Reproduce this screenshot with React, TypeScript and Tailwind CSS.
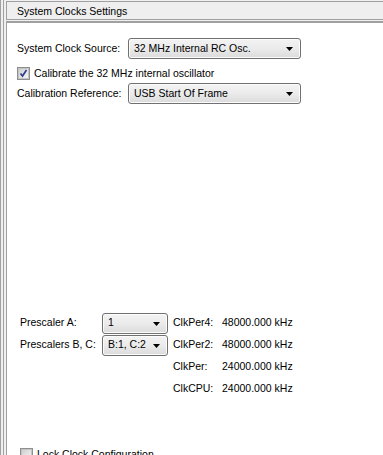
import React from 'react';

const font = { fontFamily: '"Liberation Sans", Arial, sans-serif' };

function Combo({ value, width }: { value: string; width: string }) {
    return (
        <div
            className={`relative flex h-[21px] ${width} items-center rounded-[3px] border border-[#707070] bg-gradient-to-b from-[#f3f3f3] via-[#ebebeb] to-[#dbdbdb] pl-[5px] shadow-[inset_0_0_0_1px_#fcfcfc]`}
        >
            <span className="text-black">{value}</span>
            <svg className="absolute right-[7px] top-[8px]" width="7" height="4" viewBox="0 0 7 4">
                <path d="M0 0H7L3.5 4Z" fill="#000" />
            </svg>
        </div>
    );
}

function CheckBox({ checked }: { checked?: boolean }) {
    return (
        <div className="flex h-[13px] w-[13px] items-center justify-center border border-[#8e8f8f] bg-white">
            <div className="relative h-[11px] w-[11px] border border-[#c4c4c4] bg-gradient-to-br from-[#cfcfcf] to-[#f6f6f6]">
                {checked && (
                    <svg className="absolute left-[0px] top-[0px]" width="9" height="9" viewBox="0 0 9 9">
                        <path d="M1.5 4.5L3.5 7L7.5 1" stroke="#2b3f8f" strokeWidth="1.7" fill="none" />
                    </svg>
                )}
            </div>
        </div>
    );
}

const clocks = [
    { name: 'ClkPer4:', value: '48000.000 kHz' },
    { name: 'ClkPer2:', value: '48000.000 kHz' },
    { name: 'ClkPer:', value: '24000.000 kHz' },
    { name: 'ClkCPU:', value: '24000.000 kHz' },
];

export default function App() {
    return (
        <div className="h-[455px] w-[383px] overflow-hidden bg-[#f0f0f0] text-[10.5px] text-black" style={font}>
            <div className="flex h-full border-l border-[#a0a0a0] pl-[2px]">
                <div className="flex h-full flex-1 flex-col border-l border-[#a0a0a0] pl-[2px]">
                    {/* header bar */}
                    <div className="mt-[1px] flex h-[19px] items-center border-y border-l border-[#a0a0a0] bg-[#efefef] pl-[10px] pt-[2px]">
                        System Clocks Settings
                    </div>
                    {/* settings panel */}
                    <div className="mt-[1px] flex flex-1 flex-col border-l border-t-2 border-[#a0a0a0] bg-white pl-[10px]">
                        <div className="mt-[15px] flex h-[21px] items-center">
                            <span className="w-[111px]">System Clock Source:</span>
                            <Combo value="32 MHz Internal RC Osc." width="w-[173px]" />
                        </div>
                        <div className="mt-[8px] flex h-[13px] items-center gap-[4px]">
                            <CheckBox checked />
                            <span>Calibrate the 32 MHz internal oscillator</span>
                        </div>
                        <div className="mt-[3px] flex h-[21px] items-center">
                            <span className="w-[111px]">Calibration Reference:</span>
                            <Combo value="USB Start Of Frame" width="w-[173px]" />
                        </div>

                        <div className="mt-[208px] flex pl-[3px]">
                            <div className="flex w-[82px] flex-col">
                                <div className="flex h-[22px] items-center">Prescaler A:</div>
                                <div className="flex h-[22px] items-center">Prescalers B, C:</div>
                            </div>
                            <div className="flex w-[71px] flex-col">
                                <div className="flex h-[22px] items-center">
                                    <Combo value="1" width="w-[66px]" />
                                </div>
                                <div className="flex h-[22px] items-center">
                                    <Combo value="B:1, C:2" width="w-[66px]" />
                                </div>
                            </div>
                            <div className="flex flex-col">
                                {clocks.map((c) => (
                                    <div key={c.name} className="flex h-[22px] items-center">
                                        <span className="w-[49px]">{c.name}</span>
                                        <span>{c.value}</span>
                                    </div>
                                ))}
                            </div>
                        </div>

                        <div className="mt-[48px] flex h-[13px] items-center gap-[4px] pl-[3px]">
                            <CheckBox />
                            <span>Lock Clock Configuration</span>
                        </div>
                    </div>
                </div>
            </div>
        </div>
    );
}
